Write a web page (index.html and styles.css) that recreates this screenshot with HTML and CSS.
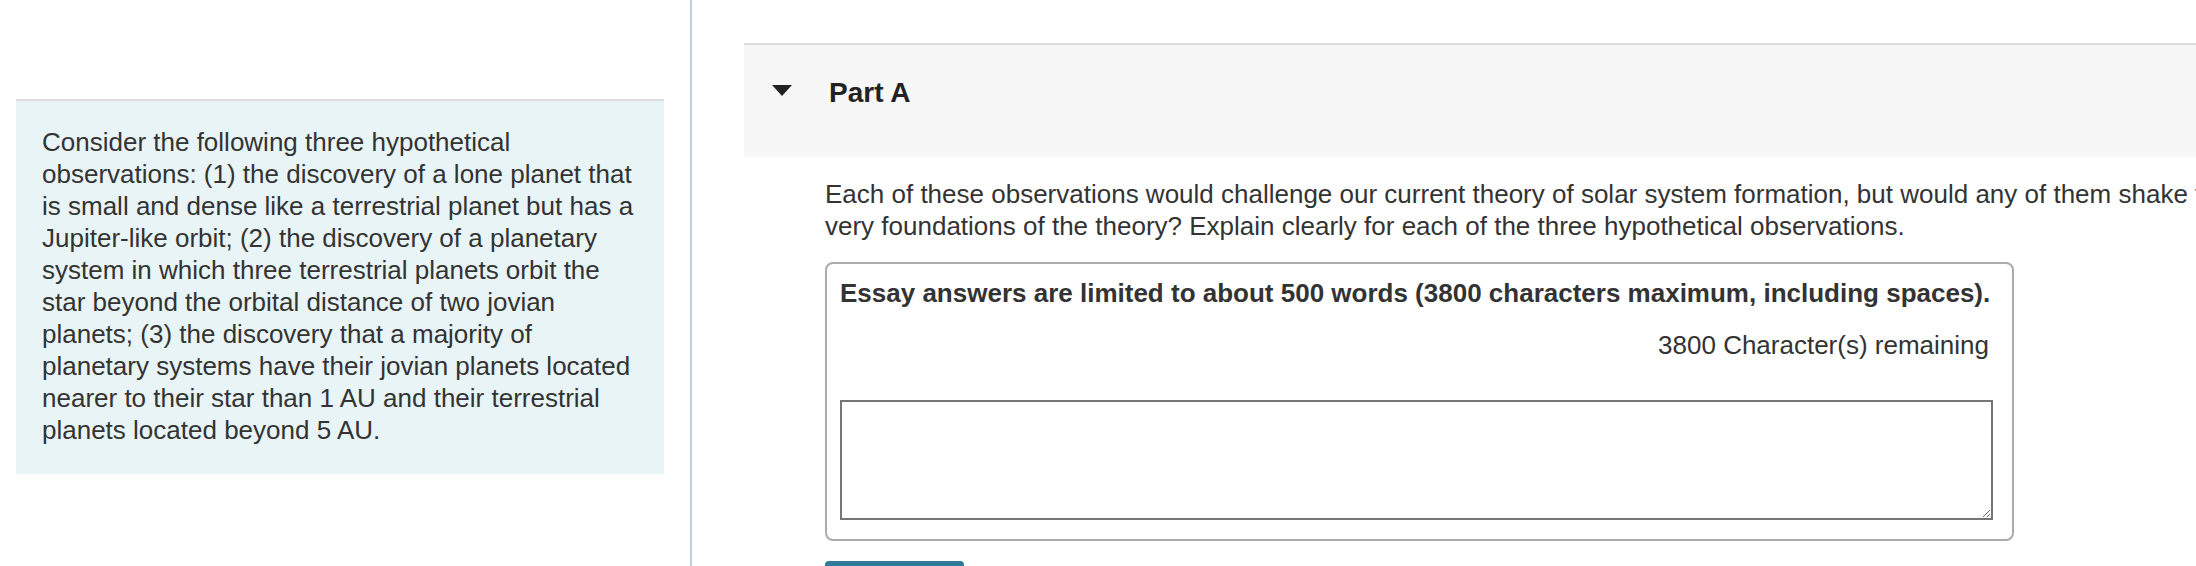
FILE: index.html
```html
<!DOCTYPE html>
<html lang="en">
<head>
    <meta charset="UTF-8">
    <meta name="viewport" content="width=device-width, initial-scale=1.0">
    <title>Part A - Essay</title>
<link rel="stylesheet" href="styles.css">
</head>
<body>
    <div class="intro-column">
        <div class="intro-card">
            Consider the following three hypothetical observations: (1) the discovery of a lone planet that is small and dense like a terrestrial planet but has a Jupiter-like orbit; (2) the discovery of a planetary system in which three terrestrial planets orbit the star beyond the orbital distance of two jovian planets; (3) the discovery that a majority of planetary systems have their jovian planets located nearer to their star than 1 AU and their terrestrial planets located beyond 5 AU.
        </div>
    </div>
    <div class="part-column">
        <div class="part-header">
            <span class="part-arrow"></span>
            <h2 class="part-title">Part A</h2>
        </div>
        <div class="part-body">
            <p class="question-text">Each of these observations would challenge our current theory of solar system formation, but would any of them shake the very foundations of the theory? Explain clearly for each of the three hypothetical observations.</p>
            <div class="essay-box">
                <p class="essay-limit">Essay answers are limited to about 500 words (3800 characters maximum, including spaces).</p>
                <div class="char-count">3800 Character(s) remaining</div>
                <textarea class="essay-input"></textarea>
            </div>
            <button class="submit-button">Submit</button>
        </div>
    </div>
</body>
</html>
```
FILE: styles.css
```css
html,
body{
    margin:0;
    height:100%;
    overflow:hidden;
}
body{
    display:flex;
    align-items:stretch;
    font-family:"Liberation Sans", Arial, sans-serif;
    font-size:26px;
    line-height:32px;
    color:#333;
    background-color:white;
}
.intro-column{
    flex-shrink:0;
    width:648px;
    padding:99px 26px 0 16px;
    border-right:2px solid #c3cedd;
}
.intro-card{
    background-color:#e9f4f7;
    border-top:2px solid #dedede;
    padding:25px 26px 28px 26px;
}
.part-column{
    flex-shrink:0;
    width:1600px;
    padding:43px 0 0 52px;
}
.part-header{
    display:flex;
    align-items:flex-start;
    gap:37px;
    background-color:#f7f7f7;
    border-top:2px solid #dddddd;
    padding:32px 0 48px 28px;
}
.part-arrow{
    width:0;
    height:0;
    margin-top:8px;
    border-left:10.5px solid transparent;
    border-right:10.5px solid transparent;
    border-top:11px solid #222;
}
.part-title{
    margin:0;
    font-size:28px;
    line-height:32px;
    font-weight:bold;
    color:#222;
}
.part-body{
    padding-left:81px;
}
.question-text{
    width:1430px;
    margin:21px 0 20px 0;
}
.essay-box{
    box-sizing:border-box;
    width:1189px;
    border:2px solid #ababab;
    border-radius:8px;
    padding:13px 19px 19px 13px;
}
.essay-limit{
    margin:0;
    font-weight:bold;
}
.char-count{
    margin-top:20px;
    padding-right:4px;
    text-align:right;
}
.essay-input{
    display:block;
    box-sizing:border-box;
    width:100%;
    height:120px;
    margin-top:39px;
    border:2px solid #767676;
    border-radius:0;
    resize:vertical;
    font-family:inherit;
    font-size:22px;
}
.submit-button{
    margin-top:20px;
    width:139px;
    height:44px;
    border:none;
    border-radius:4px;
    background-color:#31799b;
    color:white;
    font-family:inherit;
    font-size:22px;
    font-weight:bold;
    cursor:pointer;
}
```
